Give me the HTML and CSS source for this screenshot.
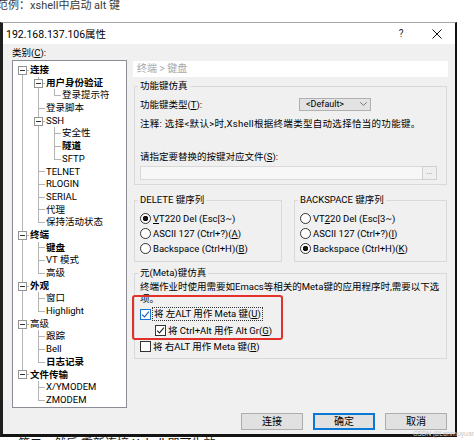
FILE: index.html
```html
<!DOCTYPE html>
<html lang="zh-CN">
<head>
<meta charset="utf-8">
<title>192.168.137.106属性</title>
<link rel="stylesheet" href="styles.css">
</head>
<body>
<div class="caption">范例：xshell中启动 alt 键</div>
<div class="dialog">
  <div class="titlebar">
    <span class="title">192.168.137.106属性</span>
    <span class="tb-btn">?</span>
    <span class="tb-btn close"><svg width="10" height="10" viewBox="0 0 10 10"><path d="M0.5 0.5 9.5 9.5M9.5 0.5 0.5 9.5" stroke="#111" stroke-width="1" fill="none"/></svg></span>
  </div>
  <div class="body">
    <div class="cat-label">类别(<u>C</u>):</div>
    <div class="main">
      <div class="tree">
        <ul>
          <li><span class="row"><span class="gut"><i class="exp"></i></span><b>连接</b></span>
            <ul>
              <li><span class="row"><span class="gut"><i class="exp"></i></span><b>用户身份验证</b></span>
                <ul>
                  <li><span class="row"><span class="gut"></span>登录提示符</span></li>
                </ul>
              </li>
              <li><span class="row"><span class="gut"></span>登录脚本</span></li>
              <li><span class="row"><span class="gut"><i class="exp"></i></span>SSH</span>
                <ul>
                  <li><span class="row"><span class="gut"></span>安全性</span></li>
                  <li><span class="row"><span class="gut"></span><b>隧道</b></span></li>
                  <li><span class="row"><span class="gut"></span>SFTP</span></li>
                </ul>
              </li>
              <li><span class="row"><span class="gut"></span>TELNET</span></li>
              <li><span class="row"><span class="gut"></span>RLOGIN</span></li>
              <li><span class="row"><span class="gut"></span>SERIAL</span></li>
              <li><span class="row"><span class="gut"></span>代理</span></li>
              <li><span class="row"><span class="gut"></span>保持活动状态</span></li>
            </ul>
          </li>
          <li><span class="row"><span class="gut"><i class="exp"></i></span><b>终端</b></span>
            <ul>
              <li><span class="row"><span class="gut"></span><b>键盘</b></span></li>
              <li><span class="row"><span class="gut"></span>VT 模式</span></li>
              <li><span class="row"><span class="gut"></span>高级</span></li>
            </ul>
          </li>
          <li><span class="row"><span class="gut"><i class="exp"></i></span><b>外观</b></span>
            <ul>
              <li><span class="row"><span class="gut"></span>窗口</span></li>
              <li><span class="row"><span class="gut"></span>Highlight</span></li>
            </ul>
          </li>
          <li><span class="row"><span class="gut"><i class="exp"></i></span>高级</span>
            <ul>
              <li><span class="row"><span class="gut"></span>跟踪</span></li>
              <li><span class="row"><span class="gut"></span>Bell</span></li>
              <li><span class="row"><span class="gut"></span><b>日志记录</b></span></li>
            </ul>
          </li>
          <li><span class="row"><span class="gut"><i class="exp"></i></span><b>文件传输</b></span>
            <ul>
              <li><span class="row"><span class="gut"></span>X/YMODEM</span></li>
              <li><span class="row"><span class="gut"></span>ZMODEM</span></li>
            </ul>
          </li>
        </ul>
      </div>
      <div class="panel">
        <div class="crumb">终端 &gt; 键盘</div>
        <fieldset class="fs-func">
          <legend>功能键仿真</legend>
          <div class="row-type">
            <span>功能键类型(<u>T</u>):</span>
            <span class="select"><span>&lt;Default&gt;</span><svg width="7" height="4" viewBox="0 0 7 4"><path d="M0.3 0.3 3.5 3.4 6.7 0.3" stroke="#666" stroke-width="0.9" fill="none"/></svg></span>
          </div>
          <div class="note">注释: 选择&lt;默认&gt;时,Xshell根据终端类型自动选择恰当的功能键。</div>
          <div class="file-label">请指定要替换的按键对应文件(<u>S</u>):</div>
          <div class="file-row">
            <span class="file-input"></span>
            <span class="browse">...</span>
          </div>
        </fieldset>
        <div class="seq-row">
          <fieldset class="fs-seq">
            <legend>DELETE 键序列</legend>
            <div class="opt first"><i class="radio on"></i><span><u>V</u>T220 Del (Esc[3~)</span></div>
            <div class="opt"><i class="radio"></i><span>ASCII 127 (Ctrl+?)(<u>A</u>)</span></div>
            <div class="opt"><i class="radio"></i><span>Backspace (Ctrl+H)(<u>B</u>)</span></div>
          </fieldset>
          <fieldset class="fs-seq">
            <legend>BACKSPACE 键序列</legend>
            <div class="opt first"><i class="radio"></i><span>VT<u>2</u>20 Del (Esc[3~)</span></div>
            <div class="opt"><i class="radio"></i><span>ASCII 127 (Ctrl+?)(<u>I</u>)</span></div>
            <div class="opt"><i class="radio on"></i><span>Backspace (Ctrl+H)(<u>K</u>)</span></div>
          </fieldset>
        </div>
        <fieldset class="fs-meta">
          <legend>元(Meta)键仿真</legend>
          <div class="meta-text">终端作业时使用需要如Emacs等相关的Meta键的应用程序时,需要以下选<br>项。</div>
          <div class="chk first"><i class="cb focus"><svg width="9" height="9" viewBox="0 0 9 9"><path d="M1.2 4.6 3.5 6.9 7.9 1.6" stroke="#1560bd" stroke-width="1.1" fill="none"/></svg></i><span class="focus-label">将 左ALT 用作 Meta 键(<u>U</u>)</span></div>
          <div class="chk sub"><i class="cb"><svg width="9" height="9" viewBox="0 0 9 9"><path d="M1.2 4.6 3.5 6.9 7.9 1.6" stroke="#222" stroke-width="1.1" fill="none"/></svg></i><span>将 Ctrl+Alt 用作 Alt Gr(<u>G</u>)</span></div>
          <div class="chk"><i class="cb"></i><span>将 右ALT 用作 Meta 键(<u>R</u>)</span></div>
          <div class="highlight"></div>
        </fieldset>
      </div>
    </div>
    <div class="buttons">
      <span class="btn">连接</span>
      <span class="btn default">确定</span>
      <span class="btn">取消</span>
    </div>
  </div>
</div>
<div class="below">第二、然后 重新连接 Xshell 即可生效</div>
<div class="watermark">CSDN @Lanmuyuan</div>
</body>
</html>
```
FILE: styles.css
```css
* { box-sizing: border-box; }
html, body { margin: 0; padding: 0; background: #fff; }
body {
  width: 474px;
  height: 440px;
  overflow: hidden;
  position: relative;
  font-family: Roboto, "Noto Sans CJK SC", sans-serif;
  font-size: 9.5px;
  color: #000;
}
u { text-decoration: underline; text-underline-offset: 1px; }

.caption {
  height: 22px;
  font-size: 11px;
  line-height: 11px;
  color: #3a3a3a;
  text-indent: -3px;
  white-space: nowrap;
}

.dialog {
  width: 457px;
  height: 415px;
  border-top: 1px solid #a5a5a5;
  border-left: 3px solid #1f1f1f;
  border-right: 2px solid #111;
  border-bottom: 3px solid #141414;
}

.titlebar {
  height: 21px;
  background: #fff;
  display: flex;
  align-items: center;
  padding: 0 10px 0 3px;
  font-size: 10.5px;
}
.title { flex: 1; }
.tb-btn {
  width: 16px;
  display: flex;
  justify-content: center;
  font-size: 10px;
  color: #222;
}
.close { margin-left: 20px; }

.body {
  height: 390px;
  background: #f0f0f0;
  padding: 3px 7px 0 9px;
}
.cat-label { height: 12px; line-height: 12px; }

.main {
  margin-top: 1px;
  display: grid;
  grid-template-columns: 115px 315px;
  column-gap: 6px;
  align-items: start;
}

/* tree */
.tree {
  height: 348px;
  background: #fff;
  border: 1px solid #8a8d93;
  padding: 3px 0 0 1px;
  overflow: hidden;
}
.tree ul { list-style: none; margin: 0; padding: 0; }
.tree ul ul { padding-left: 16px; }
.tree li {
  background: linear-gradient(#b4b4b4, #b4b4b4) no-repeat 8px 0 / 1px 100%;
}
.tree > ul > li:first-child {
  background: linear-gradient(#b4b4b4, #b4b4b4) no-repeat 8px 6px / 1px calc(100% - 6px);
}
.tree li:last-child { background: none; }
.tree .row {
  display: flex;
  align-items: center;
  height: 12.7px;
  line-height: 12.7px;
  white-space: nowrap;
  background: linear-gradient(#b4b4b4, #b4b4b4) no-repeat 8px 50% / 7px 1px;
}
.tree li:last-child > .row {
  background:
    linear-gradient(#b4b4b4, #b4b4b4) no-repeat 8px 0 / 1px 50%,
    linear-gradient(#b4b4b4, #b4b4b4) no-repeat 8px 50% / 7px 1px;
}
.tree .gut {
  width: 16px;
  flex: none;
  display: flex;
  align-items: center;
}
.tree .exp {
  width: 9px;
  height: 9px;
  margin-left: 4px;
  border: 1px solid #949494;
  background: #fff linear-gradient(#333, #333) no-repeat center / 5px 1px;
}
.tree b { font-weight: 700; }

/* panel */
.panel { margin-top: 1px; }
.crumb {
  height: 16px;
  line-height: 16px;
  background: #fff;
  color: #a8a8a8;
  padding-left: 4px;
  font-size: 10px;
}
fieldset {
  margin: 0 1px;
  border: 1px solid #d9d9d9;
  padding: 0 5px 4px;
  min-width: 0;
}
legend {
  padding: 0 2px;
  margin-left: -2px;
  line-height: 12px;
}
.fs-func { margin-top: 3px; }
.row-type {
  margin-top: 5px;
  height: 14px;
  display: flex;
  align-items: center;
}
.row-type > span:first-child { flex: 1; }
.select {
  width: 72px;
  height: 13px;
  margin-right: 70px;
  background: #e3e3e3;
  border: 1px solid #b0b0b0;
  display: flex;
  align-items: center;
  justify-content: space-between;
  padding: 0 3px 0 6px;
  font-size: 9px;
  line-height: 11px;
}
.note { margin-top: 7px; line-height: 12px; white-space: nowrap; letter-spacing: 0.3px; }
.file-label { margin-top: 21px; line-height: 12px; }
.file-row {
  margin-top: 3px;
  margin-right: 4px;
  height: 14px;
  display: flex;
}
.file-input {
  flex: 1;
  background: #f7f7f7;
  border: 1px solid #d9d9d9;
  border-right: none;
}
.browse {
  width: 15px;
  background: #efefef;
  border: 1px solid #d0d0d0;
  color: #8a8a8a;
  font-size: 8px;
  line-height: 10px;
  text-align: center;
}

.seq-row {
  margin: 9px 1px 0;
  display: grid;
  grid-template-columns: 148px 153px;
  column-gap: 12px;
}
.seq-row fieldset { margin: 0; padding-bottom: 5px; }
.opt {
  height: 15px;
  display: flex;
  align-items: center;
  gap: 2px;
  white-space: nowrap;
}
.opt.first { margin-top: 5px; }
.radio {
  width: 11px;
  height: 11px;
  flex: none;
  border: 1px solid #333;
  border-radius: 50%;
  background: #fff;
}
.radio.on { background: radial-gradient(circle, #111 0 2.5px, #fff 3px); }

.fs-meta { margin-top: 5px; position: relative; }
.meta-text { margin-top: 2px; line-height: 12px; white-space: nowrap; }
.chk {
  height: 16px;
  display: flex;
  align-items: center;
  gap: 2px;
  white-space: nowrap;
}
.chk.first { margin-top: 1px; }
.chk.sub { padding-left: 15px; }
.cb {
  width: 11px;
  height: 11px;
  flex: none;
  border: 1px solid #333;
  background: #fff;
  display: flex;
  align-items: center;
  justify-content: center;
}
.cb.focus { border-color: #1a73d6; }
.focus-label { outline: 1px dotted #333; padding: 0 1px; line-height: 12px; }
.highlight {
  position: absolute;
  left: -3px;
  top: 16px;
  width: 151px;
  height: 45px;
  border: 2px solid #e2302a;
  border-radius: 3px;
}

.buttons {
  margin-top: 5px;
  padding-right: 1px;
  display: flex;
  justify-content: flex-end;
  gap: 10px;
}
.btn {
  width: 62px;
  height: 17px;
  background: #e1e1e1;
  border: 1px solid #adadad;
  text-align: center;
  line-height: 15px;
  font-size: 10px;
}
.btn.default { border-color: #0a78d4; box-shadow: inset 0 0 0 1px #0a78d4; }

.below {
  margin: 1px 0 0 18px;
  font-size: 12px;
  line-height: 12px;
  color: #111;
  white-space: nowrap;
}
.watermark {
  position: absolute;
  left: 413px;
  top: 430px;
  font-size: 7px;
  line-height: 8px;
  color: #c9c9c9;
  white-space: nowrap;
}
```
